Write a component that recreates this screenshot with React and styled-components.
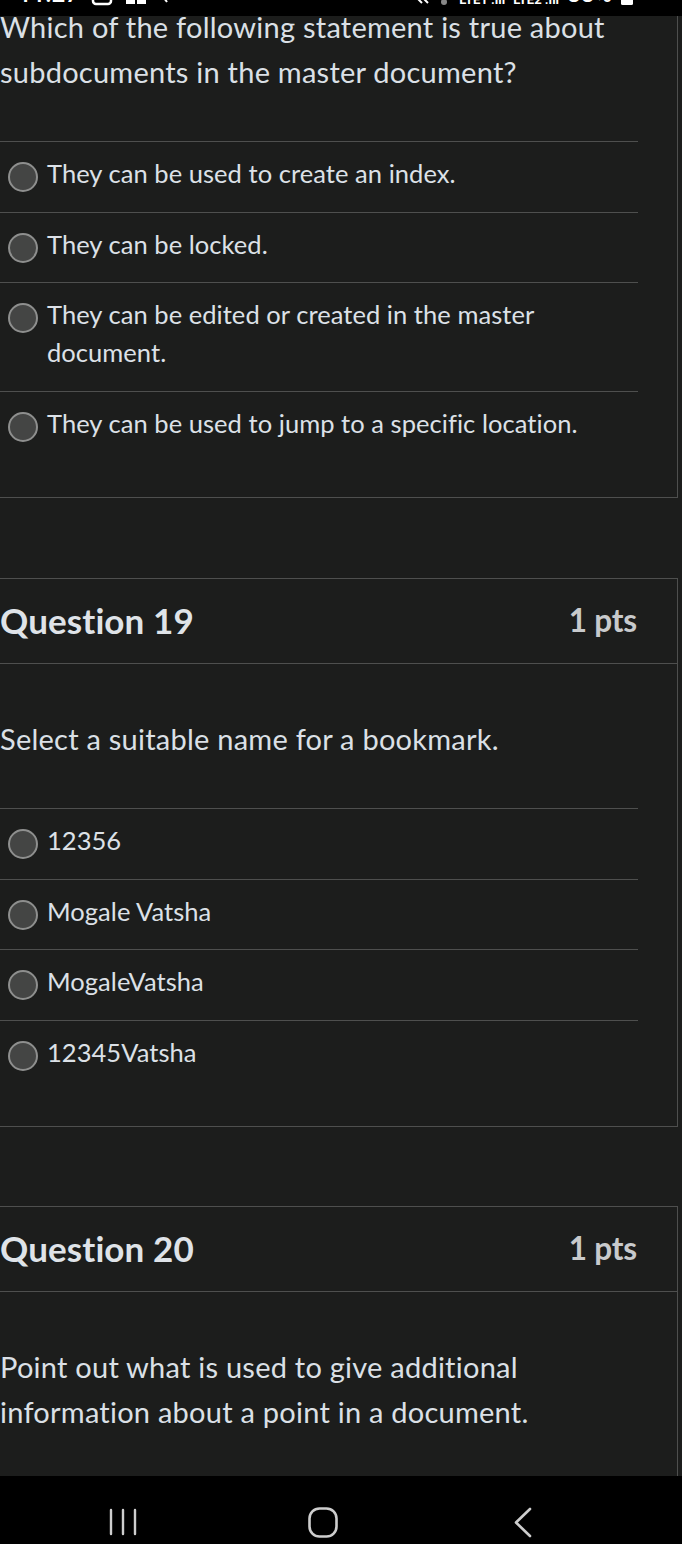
import React from "react";
import styled, { createGlobalStyle } from "styled-components";

const GlobalStyle = createGlobalStyle`
  html, body {
    margin: 0;
    padding: 0;
    background: #1c1d1c;
  }
  body {
    font-family: Lato, "Open Sans", "Liberation Sans", sans-serif;
    -webkit-font-smoothing: antialiased;
  }
  * { box-sizing: border-box; }
`;

const Page = styled.div`
  position: relative;
  width: 682px;
  height: 1544px;
  display: flex;
  flex-direction: column;
  overflow: hidden;
  background: #1c1d1c;
`;

const StatusBar = styled.div`
  position: absolute;
  top: 0;
  left: 0;
  right: 0;
  height: 16px;
  background: #000;
  z-index: 2;
  overflow: hidden;
  display: flex;
  align-items: flex-end;
  justify-content: space-between;
  padding: 0 48px 10px 18px;
  color: #fff;
  font-family: Roboto, "Liberation Sans", sans-serif;
`;

const StatusGroup = styled.div`
  display: flex;
  align-items: flex-end;
  gap: ${(p) => p.$gap || 8}px;
  height: 24px;
  font-size: 24px;
  line-height: 24px;
  font-weight: 500;
  white-space: nowrap;
`;

const SmallText = styled.span`
  font-size: 13px;
  line-height: 13px;
  font-weight: 700;
`;

const Viewport = styled.main`
  flex: 1;
  overflow: hidden;
  padding-top: 4px;
`;

const Card = styled.section`
  width: 678px;
  border: 1px solid #4e4f4e;
  border-left: none;
  border-top: ${(p) => (p.$cut ? "none" : "1px solid #4e4f4e")};
  margin-bottom: ${(p) => (p.$cut ? 80 : 79)}px;
  color: #dce1e7;
`;

const Header = styled.header`
  height: 85px;
  border-bottom: 1px solid #4e4f4e;
  display: flex;
  align-items: center;
  justify-content: space-between;
  padding: 0 40px 3px 0;
`;

const Title = styled.h2`
  margin: 0;
  font-size: 35px;
  font-weight: 700;
  color: #dfe3e8;
  letter-spacing: 0.1px;
  font-variant-ligatures: no-common-ligatures;
`;

const Points = styled.span`
  font-size: 31.5px;
  font-weight: 700;
  color: #c8cacc;
  letter-spacing: -0.2px;
`;

const Body = styled.div`
  padding: ${(p) => (p.$cut ? "0" : "52px")} 39px 36px 0;
`;

const QuestionText = styled.p`
  margin: 0 0 47px;
  font-size: 29px;
  line-height: 45px;
  color: #dbe0e6;
  letter-spacing: 0.24px;
`;

const Answers = styled.ul`
  list-style: none;
  margin: 0;
  padding: 0;
`;

const Answer = styled.li`
  display: flex;
  align-items: flex-start;
  gap: 9px;
  padding: 12px 0 19.5px;
  border-top: 1px solid #4e4f4e;
`;

const Radio = styled.span`
  flex: 0 0 auto;
  width: 30px;
  height: 30px;
  margin: 8px 0 0 8px;
  border-radius: 50%;
  background: #444544;
  border: 2px solid #8e8f8e;
`;

const AnswerText = styled.span`
  font-size: 25.5px;
  line-height: 38px;
  color: #dce1e7;
  letter-spacing: 0.05px;
`;

const NavBar = styled.nav`
  height: 68px;
  flex: 0 0 68px;
  background: #000;
  display: flex;
  align-items: center;
  justify-content: center;
  gap: 160px;
  padding: 24px 36px 0 0;
  color: #cdcdcd;
`;

const NavButton = styled.span`
  display: flex;
  align-items: center;
  justify-content: center;
  width: 40px;
  height: 44px;
`;

const questions = [
  {
    id: 18,
    cut: true,
    text: "Which of the following statement is true about subdocuments in the master document?",
    answers: [
      "They can be used to create an index.",
      "They can be locked.",
      "They can be edited or created in the master document.",
      "They can be used to jump to a specific location.",
    ],
  },
  {
    id: 19,
    text: "Select a suitable name for a bookmark.",
    answers: ["12356", "Mogale Vatsha", "MogaleVatsha", "12345Vatsha"],
  },
  {
    id: 20,
    text: "Point out what is used to give additional information about a point in a document.",
    answers: [],
  },
];

function QuestionCard({ q }) {
  return (
    <Card $cut={q.cut}>
      {!q.cut && (
        <Header>
          <Title>Question {q.id}</Title>
          <Points>1 pts</Points>
        </Header>
      )}
      <Body $cut={q.cut}>
        <QuestionText>{q.text}</QuestionText>
        {q.answers.length > 0 && (
          <Answers>
            {q.answers.map((a) => (
              <Answer key={a}>
                <Radio />
                <AnswerText>{a}</AnswerText>
              </Answer>
            ))}
          </Answers>
        )}
      </Body>
    </Card>
  );
}

export default function App() {
  return (
    <>
      <GlobalStyle />
      <Page>
        <StatusBar>
          <StatusGroup $gap={12}>
            <span>11:27</span>
            <svg width="22" height="22" viewBox="0 0 22 22" fill="none" stroke="#fff" strokeWidth="2.5">
              <rect x="2" y="2" width="18" height="18" rx="3" />
            </svg>
            <svg width="22" height="22" viewBox="0 0 22 22" fill="#fff">
              <rect x="1" y="4" width="9" height="16" />
              <rect x="12" y="4" width="9" height="16" />
            </svg>
            <svg width="10" height="22" viewBox="0 0 10 22" fill="none" stroke="#fff" strokeWidth="2">
              <path d="M2 10l6 8" />
            </svg>
          </StatusGroup>
          <StatusGroup $gap={8}>
            <svg width="14" height="22" viewBox="0 0 14 22" fill="none" stroke="#fff" strokeWidth="2">
              <path d="M2 14l5 5M8 14l5 5" />
            </svg>
            <svg width="14" height="22" viewBox="0 0 14 22" fill="#888">
              <circle cx="7" cy="18" r="3" />
            </svg>
            <SmallText>LTE1 .ıll</SmallText>
            <SmallText>LTE2 .ıll</SmallText>
            <span>88%</span>
            <svg width="14" height="24" viewBox="0 0 14 24" fill="#fff">
              <rect x="1" y="2" width="12" height="21" rx="1.5" />
            </svg>
          </StatusGroup>
        </StatusBar>
        <Viewport>
          {questions.map((q) => (
            <QuestionCard key={q.id} q={q} />
          ))}
        </Viewport>
        <NavBar>
          <NavButton>
            <svg width="28" height="28" viewBox="0 0 28 28" fill="none" stroke="currentColor" strokeWidth="2.4" strokeLinecap="round">
              <path d="M2 2v24M14 2v24M26 2v24" />
            </svg>
          </NavButton>
          <NavButton>
            <svg width="30" height="31" viewBox="0 0 30 31" fill="none" stroke="currentColor" strokeWidth="2.6">
              <rect x="1.5" y="1.5" width="27" height="28" rx="10" />
            </svg>
          </NavButton>
          <NavButton>
            <svg width="20" height="31" viewBox="0 0 20 31" fill="none" stroke="currentColor" strokeWidth="2.6" strokeLinecap="round" strokeLinejoin="round">
              <path d="M17 2L3 15.5 17 29" />
            </svg>
          </NavButton>
        </NavBar>
      </Page>
    </>
  );
}
